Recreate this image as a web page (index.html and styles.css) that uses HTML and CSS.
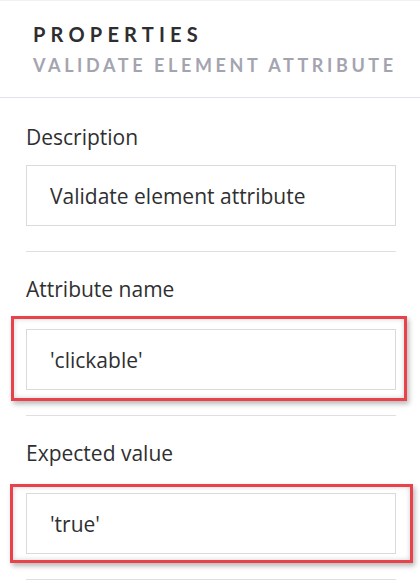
FILE: index.html
```html
<!DOCTYPE html>
<html lang="en">
<head>
<meta charset="utf-8">
<title>Properties</title>
<link rel="stylesheet" href="styles.css">
</head>
<body>
<div class="panel">
  <header class="panel-header">
    <div class="title">PROPERTIES</div>
    <div class="subtitle">VALIDATE ELEMENT ATTRIBUTE</div>
  </header>
  <div class="content">
    <section class="field field-first">
      <div class="label">Description</div>
      <div class="input-wrap gap-small">
        <div class="input">Validate element attribute</div>
      </div>
    </section>
    <section class="field">
      <div class="label">Attribute name</div>
      <div class="input-wrap gap-large mark mark-a">
        <div class="input">'clickable'</div>
      </div>
    </section>
    <section class="field">
      <div class="label">Expected value</div>
      <div class="input-wrap gap-large mark mark-b">
        <div class="input">'true'</div>
      </div>
    </section>
  </div>
</div>
</body>
</html>
```

FILE: styles.css
```css
html, body {
  margin: 0;
  padding: 0;
  background: #ffffff;
}
body {
  font-family: "Open Sans", Lato, "Liberation Sans", sans-serif;
  color: #333333;
  width: 420px;
  height: 583px;
  overflow: hidden;
}
.panel {
  border-top: 1px solid #f1f1f3;
}
.panel-header {
  padding: 21px 20px 21px 33px;
  border-bottom: 1px solid #e2e2ea;
  font-family: Lato, "Open Sans", "Liberation Sans", sans-serif;
}
.title {
  font-size: 20px;
  line-height: 24px;
  font-weight: 700;
  letter-spacing: 5.2px;
  color: #2e2e30;
}
.subtitle {
  margin-top: 8px;
  font-size: 18px;
  line-height: 22px;
  font-weight: 700;
  letter-spacing: 3.6px;
  color: #a4a4b0;
}
.content {
  padding: 0 24px 0 26px;
}
.field {
  padding-top: 25px;
  padding-bottom: 25px;
  border-bottom: 1px solid #dedee3;
}
.field-first {
  padding-top: 27px;
}
.label {
  font-size: 21px;
  line-height: 24px;
  color: #2f2f31;
}
.input-wrap {
  position: relative;
}
.gap-small {
  margin-top: 16px;
}
.gap-large {
  margin-top: 28px;
}
.input {
  box-sizing: border-box;
  height: 61px;
  border: 1px solid #d9d9de;
  background: #ffffff;
  padding: 0 16px 0 23px;
  display: flex;
  align-items: center;
  font-size: 21px;
  color: #2f2f31;
}
.mark::before {
  content: "";
  position: absolute;
  border: 3px solid #e8434b;
  box-shadow: inset 0 0 5px rgba(0, 0, 0, 0.18), 2px 3px 5px rgba(0, 0, 0, 0.28);
  pointer-events: none;
}
.mark-a::before {
  top: -13px;
  left: -15px;
  right: -11px;
  bottom: -11px;
}
.mark-b::before {
  top: -9px;
  left: -16px;
  right: -17px;
  bottom: -9px;
}
```
